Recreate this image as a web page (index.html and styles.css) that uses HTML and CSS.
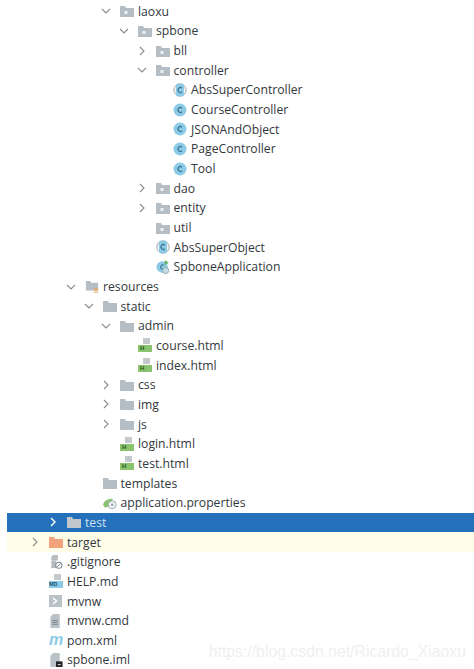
FILE: index.html
```html
<!DOCTYPE html>
<html>
<head>
	<meta charset="UTF-8">
	<title>Project tree</title>
	<link rel="stylesheet" href="styles.css">
</head>
<body>
	<svg class="defs" width="0" height="0">
		<symbol id="open" viewBox="0 0 10 10"><path d="M1 3l4 4 4-4" fill="none" stroke="#8c8c8c" stroke-width="1.1"/></symbol>
		<symbol id="closed" viewBox="0 0 10 10"><path d="M3 1l4 4-4 4" fill="none" stroke="#8c8c8c" stroke-width="1.1"/></symbol>
		<symbol id="closed-white" viewBox="0 0 10 10"><path d="M3 1l4 4-4 4" fill="none" stroke="#fff" stroke-width="1.4"/></symbol>
		<symbol id="package" viewBox="0 0 14 14"><path d="M0 2h5l1 2h8v9H0z" fill="#b4bec4"/><rect x="4.500" y="7" width="3" height="3" fill="#eef1f2"/></symbol>
		<symbol id="folder" viewBox="0 0 14 14"><path d="M0 2h5l1 2h8v9H0z" fill="#b4bec4"/></symbol>
		<symbol id="folder-test" viewBox="0 0 14 14"><path d="M0 2h5l1 2h8v9H0z" fill="#c0c8ce"/></symbol>
		<symbol id="folder-target" viewBox="0 0 14 14"><path d="M0 2h5l1 2h8v9H0z" fill="#f2a27c"/></symbol>
		<symbol id="folder-res" viewBox="0 0 14 16"><path d="M0 1h5l1 2h8v9H0z" fill="#b4bec4"/><path d="M9 9h5v1.200H9zM9 11.200h5v1.200H9zM9 13.400h5v1.200H9z" fill="#e6a85c"/></symbol>
		<symbol id="class" viewBox="0 0 14 14"><circle cx="7" cy="7" r="6.500" fill="#8ccbe6"/><path d="M9 5.200A2.400 2.400 0 1 0 9 8.800" fill="none" stroke="#3a6f8c" stroke-width="1.200"/></symbol>
		<symbol id="abstract" viewBox="0 0 14 14"><circle cx="7" cy="7" r="6.200" fill="#eef2f4" stroke="#a3adb3" stroke-width="1"/><rect x="3" y=".8" width="8" height="12.400" rx="2" fill="#8ccbe6"/><path d="M9 5.200A2.400 2.400 0 1 0 9 8.800" fill="none" stroke="#3a6f8c" stroke-width="1.200"/></symbol>
		<symbol id="spring" viewBox="0 0 16 16"><circle cx="7" cy="8" r="6.500" fill="#8ccbe6"/><path d="M9 6A2.400 2.400 0 1 0 9 10" fill="none" stroke="#3a6f8c" stroke-width="1.200"/><path d="M10 0l4.500 3L10 6z" fill="#5fb760"/><circle cx="11" cy="12" r="3.500" fill="#c6dce6" stroke="#8aa2ae"/></symbol>
		<symbol id="props" viewBox="0 0 16 14"><path d="M0 9c1-5 6-7 11-7-1 5-3 10-9 10z" fill="#8cc36e"/><circle cx="10.500" cy="9" r="4.500" fill="#eef2f4" stroke="#98a6ae"/><circle cx="10.500" cy="9" r="1.500" fill="#98a6ae"/></symbol>
		<symbol id="ignore" viewBox="0 0 14 15"><path d="M4 0h5v6H2V2z" fill="#b6bcc0"/><path d="M2 6h5v8H2z" fill="#b6bcc0"/><circle cx="10" cy="11" r="3.300" fill="#fff" stroke="#7c868c" stroke-width="1.100"/><path d="M8 13l4-4" stroke="#7c868c"/></symbol>
		<symbol id="shell" viewBox="0 0 14 14"><rect y="1" width="13" height="12" fill="#b9c2c7"/><path d="M4 4l3.500 3L4 10" fill="none" stroke="#fff" stroke-width="1.500"/></symbol>
		<symbol id="text-file" viewBox="0 0 14 15"><path d="M4 0h7v15H1V3z" fill="#b9c2c7"/><path d="M3 7h6M3 9h6M3 11h6" stroke="#68747a" stroke-width=".8"/></symbol>
		<symbol id="iml" viewBox="0 0 14 15"><path d="M4 0h7v15H1V3z" fill="#b9c2c7"/><rect x="7" y="9" width="7" height="6" fill="#222"/><rect x="9" y="12" width="3" height="1" fill="#fff"/></symbol>
	</svg>

	<div class="tree">
		<div class="row d4"><svg class="arrow"><use href="#open"/></svg><svg class="icon"><use href="#package"/></svg><span>laoxu</span></div>
		<div class="row d5"><svg class="arrow"><use href="#open"/></svg><svg class="icon"><use href="#package"/></svg><span>spbone</span></div>
		<div class="row d6"><svg class="arrow"><use href="#closed"/></svg><svg class="icon"><use href="#package"/></svg><span>bll</span></div>
		<div class="row d6"><svg class="arrow"><use href="#open"/></svg><svg class="icon"><use href="#package"/></svg><span>controller</span></div>
		<div class="row d7"><svg class="icon"><use href="#abstract"/></svg><span>AbsSuperController</span></div>
		<div class="row d7"><svg class="icon"><use href="#class"/></svg><span>CourseController</span></div>
		<div class="row d7"><svg class="icon"><use href="#class"/></svg><span>JSONAndObject</span></div>
		<div class="row d7"><svg class="icon"><use href="#class"/></svg><span>PageController</span></div>
		<div class="row d7"><svg class="icon"><use href="#class"/></svg><span>Tool</span></div>
		<div class="row d6"><svg class="arrow"><use href="#closed"/></svg><svg class="icon"><use href="#package"/></svg><span>dao</span></div>
		<div class="row d6"><svg class="arrow"><use href="#closed"/></svg><svg class="icon"><use href="#package"/></svg><span>entity</span></div>
		<div class="row d6"><svg class="icon"><use href="#package"/></svg><span>util</span></div>
		<div class="row d6"><svg class="icon"><use href="#abstract"/></svg><span>AbsSuperObject</span></div>
		<div class="row d6"><svg class="icon"><use href="#spring"/></svg><span>SpboneApplication</span></div>
		<div class="row d2"><svg class="arrow"><use href="#open"/></svg><svg class="icon"><use href="#folder-res"/></svg><span>resources</span></div>
		<div class="row d3"><svg class="arrow"><use href="#open"/></svg><svg class="icon"><use href="#folder"/></svg><span>static</span></div>
		<div class="row d4"><svg class="arrow"><use href="#open"/></svg><svg class="icon"><use href="#folder"/></svg><span>admin</span></div>
		<div class="row d5"><i class="badge html">H</i><span>course.html</span></div>
		<div class="row d5"><i class="badge html">H</i><span>index.html</span></div>
		<div class="row d4"><svg class="arrow"><use href="#closed"/></svg><svg class="icon"><use href="#folder"/></svg><span>css</span></div>
		<div class="row d4"><svg class="arrow"><use href="#closed"/></svg><svg class="icon"><use href="#folder"/></svg><span>img</span></div>
		<div class="row d4"><svg class="arrow"><use href="#closed"/></svg><svg class="icon"><use href="#folder"/></svg><span>js</span></div>
		<div class="row d4"><i class="badge html">H</i><span>login.html</span></div>
		<div class="row d4"><i class="badge html">H</i><span>test.html</span></div>
		<div class="row d3"><svg class="icon"><use href="#folder"/></svg><span>templates</span></div>
		<div class="row d3"><svg class="icon"><use href="#props"/></svg><span>application.properties</span></div>
		<div class="row d1 selected"><svg class="arrow"><use href="#closed-white"/></svg><svg class="icon"><use href="#folder-test"/></svg><span>test</span></div>
		<div class="row d0 excluded"><svg class="arrow"><use href="#closed"/></svg><svg class="icon"><use href="#folder-target"/></svg><span>target</span></div>
		<div class="row d0"><svg class="icon"><use href="#ignore"/></svg><span>.gitignore</span></div>
		<div class="row d0"><i class="badge md">MD</i><span>HELP.md</span></div>
		<div class="row d0"><svg class="icon"><use href="#shell"/></svg><span>mvnw</span></div>
		<div class="row d0"><svg class="icon"><use href="#text-file"/></svg><span>mvnw.cmd</span></div>
		<div class="row d0"><i class="maven">m</i><span>pom.xml</span></div>
		<div class="row d0"><svg class="icon"><use href="#iml"/></svg><span>spbone.iml</span></div>
	</div>

	<div class="watermark">https://blog.csdn.net/Ricardo_Xiaoxu</div>
</body>
</html>
```

FILE: styles.css
```css
html, body {
	margin: 0;
	height: 669px;
	overflow: hidden;
	background: #fff;
}

body {
	position: relative;
	font-family: "Open Sans", "Noto Sans", sans-serif;
	font-size: 12.2px;
	color: #33383d;
}

.defs {
	position: absolute;
}

.tree {
	margin-left: 7px;
	padding-top: 1.5px;
}

.row {
	display: flex;
	align-items: center;
	height: 19.66px;
	position: relative;
	white-space: nowrap;
}

.d0 { padding-left: 42px; }
.d1 { padding-left: 60px; }
.d2 { padding-left: 78px; }
.d3 { padding-left: 95.5px; }
.d4 { padding-left: 113px; }
.d5 { padding-left: 131px; }
.d6 { padding-left: 148.5px; }
.d7 { padding-left: 166px; }

.arrow {
	position: absolute;
	width: 10px;
	height: 10px;
	margin-left: -19px;
}

.icon {
	width: 14px;
	height: 14px;
	margin-right: 4px;
	flex: none;
}

/* file icons with a coloured strip holding a real letter */
.badge {
	width: 14px;
	height: 14px;
	margin-right: 4px;
	flex: none;
	box-sizing: border-box;
	padding-top: 7px;
	padding-left: 2px;
	font-family: "Liberation Sans", sans-serif;
	font-size: 6px;
	font-weight: bold;
	font-style: normal;
	line-height: 7px;
	background-repeat: no-repeat;
}

.html {
	color: #1f5a24;
	background-image: linear-gradient(#8cc36e, #8cc36e), linear-gradient(#c3c9cc, #c3c9cc);
	background-size: 14px 7px, 7px 6px;
	background-position: 0 7px, 5px 0;
}

.md {
	padding-left: 0;
	font-size: 5.5px;
	color: #1f4f70;
	background-image: linear-gradient(#8ccbe6, #8ccbe6), linear-gradient(#c3c9cc, #c3c9cc);
	background-size: 14px 7px, 7px 6px;
	background-position: 0 7px, 5px 0;
}

.maven {
	width: 14px;
	margin-right: 4px;
	flex: none;
	font-family: "Liberation Sans", sans-serif;
	font-size: 16px;
	font-weight: bold;
	font-style: italic;
	line-height: 14px;
	color: #8ccbe6;
}

.selected {
	background: #2470bb;
	color: #cfe0f0;
}

.excluded {
	background: #fffde8;
}

.watermark {
	position: absolute;
	right: 8px;
	bottom: 8px;
	font-family: "Liberation Sans", sans-serif;
	font-size: 15.8px;
	color: #efefef;
}
```
